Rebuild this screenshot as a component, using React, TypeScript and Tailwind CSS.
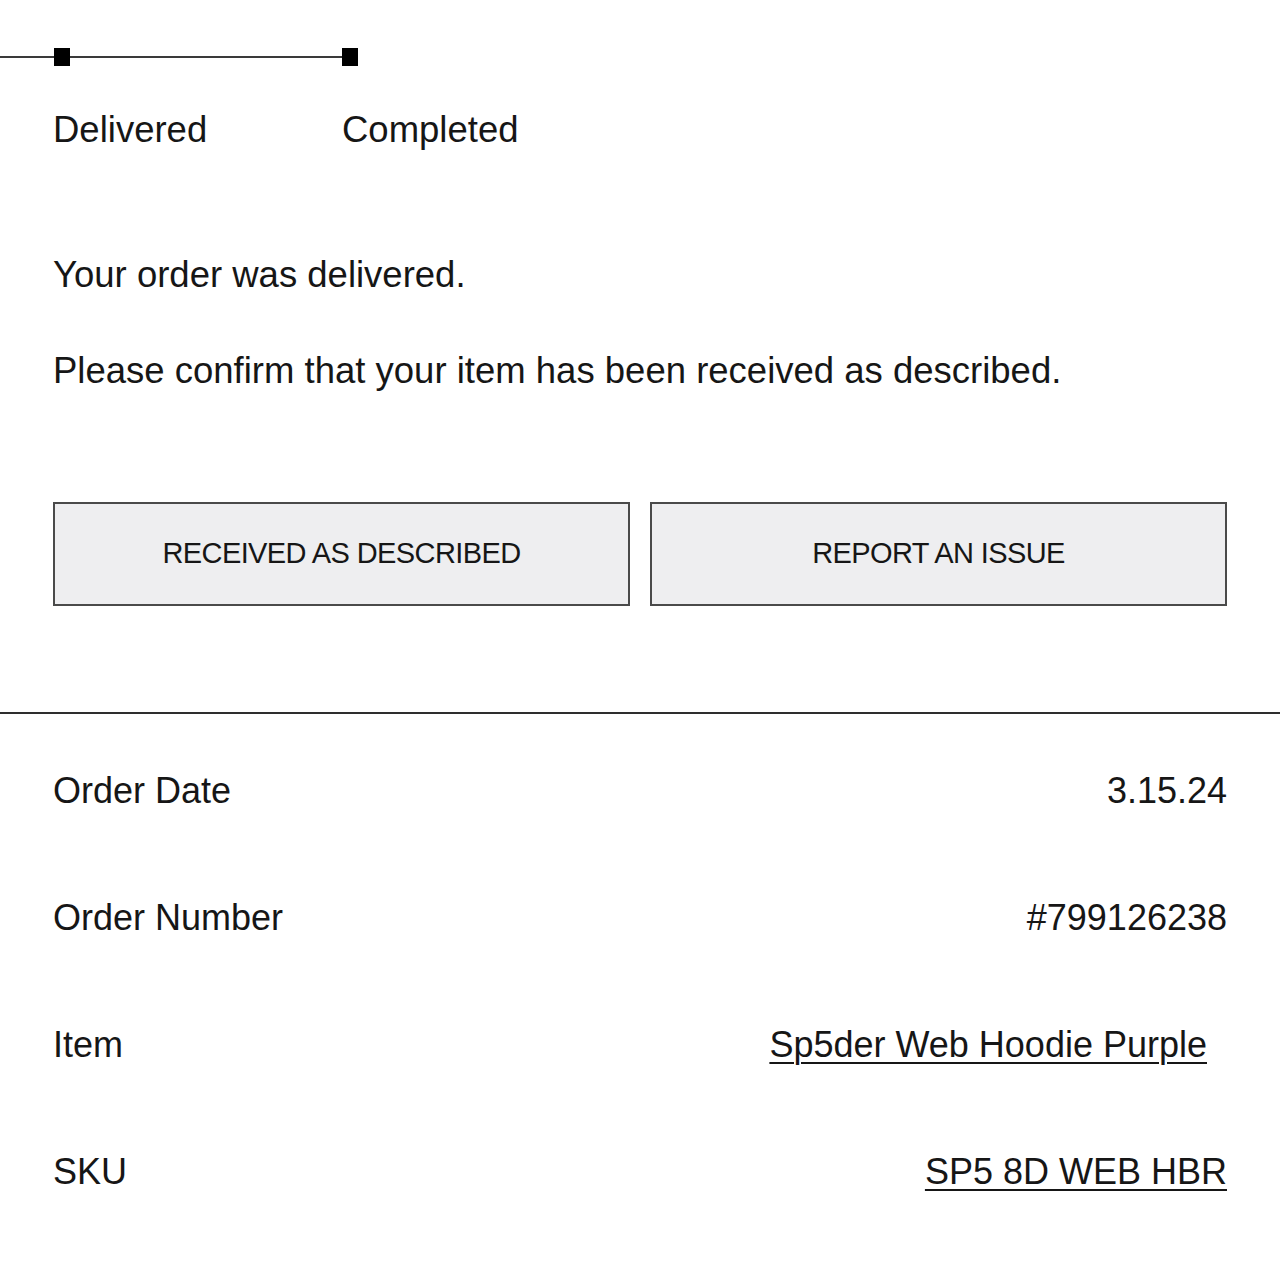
import React from 'react';

const rows = [
  { label: 'Order Date', value: '3.15.24' },
  { label: 'Order Number', value: '#799126238' },
  { label: 'Item', value: 'Sp5der Web Hoodie Purple', link: true, inset: true },
  { label: 'SKU', value: 'SP5 8D WEB HBR', link: true },
];

const App = () => {
  return (
    <div className="w-[1280px] h-[1280px] bg-white text-[#161616] font-['Liberation_Sans',Arial,sans-serif] overflow-hidden">
      {/* progress track */}
      <div className="pt-[48px] flex items-center h-[66px]">
        <div className="w-[54px] h-[2px] bg-[#3a3a3a]" />
        <div className="w-4 h-[18px] bg-black" />
        <div className="w-[272px] h-[2px] bg-[#3a3a3a]" />
        <div className="w-4 h-[18px] bg-black" />
      </div>
      <div className="mt-[42px] flex pl-[53px] text-[36.5px] leading-[43px]">
        <div className="w-[289px]">Delivered</div>
        <div>Completed</div>
      </div>

      <div className="px-[53px]">
        <p className="mt-[102px] text-[36.5px] leading-[43px]">Your order was delivered.</p>
        <p className="mt-[53px] text-[36.5px] leading-[43px]">
          Please confirm that your item has been received as described.
        </p>
        <div className="mt-[110px] grid grid-cols-2 gap-5">
          <button className="h-[104px] bg-[#eeeef0] border-2 border-[#4a4a4a] text-[29px] tracking-[-0.6px] text-[#161616]">
            RECEIVED AS DESCRIBED
          </button>
          <button className="h-[104px] bg-[#eeeef0] border-2 border-[#4a4a4a] text-[29px] tracking-[-0.6px] text-[#161616]">
            REPORT AN ISSUE
          </button>
        </div>
      </div>

      <div className="mt-[106px] h-[2px] bg-[#2e2e2e]" />

      <div className="mt-[13px] px-[53px]">
        {rows.map((r) => (
          <div key={r.label} className="h-[127px] flex items-center justify-between text-[36px]">
            <span>{r.label}</span>
            <span className={`${r.link ? 'underline underline-offset-[5px] decoration-2' : ''} ${r.inset ? 'pr-5' : ''}`}>
              {r.value}
            </span>
          </div>
        ))}
      </div>
    </div>
  );
};

export default App;
